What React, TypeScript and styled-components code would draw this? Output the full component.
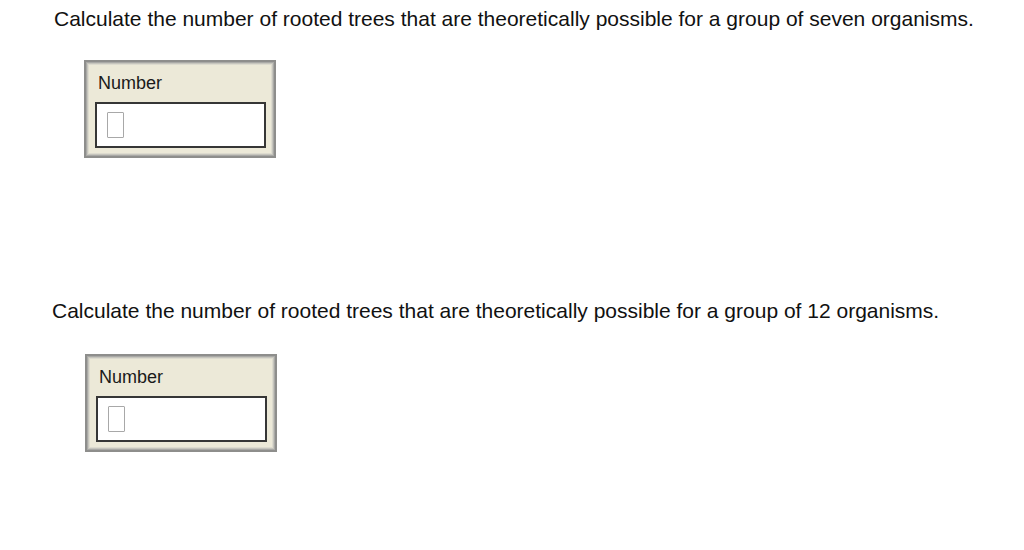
import styled, { createGlobalStyle } from "styled-components";

const GlobalStyle = createGlobalStyle`
    body {
        margin: 0;
        background: #ffffff;
        font-family: "Liberation Sans", Arial, sans-serif;
        color: #111111;
    }
`;

const Page = styled.div`
    width: 1024px;
    height: 550px;
    overflow: hidden;
`;

const Question = styled.div<{ $top: number; $left: number }>`
    margin-top: ${(p) => p.$top}px;
    padding-left: ${(p) => p.$left}px;
    font-size: 21px;
    line-height: 24px;
    white-space: nowrap;
`;

const Frame = styled.div<{ $top: number; $left: number }>`
    margin-top: ${(p) => p.$top}px;
    margin-left: ${(p) => p.$left}px;
    width: 192px;
    box-sizing: border-box;
    background: #ece9d8;
    border: 2px solid #8e8e8c;
    box-shadow: inset 0 0 0 1px #a9a9a6, inset 0 0 0 2px #c6c5bd,
        inset 0 0 0 3px #dddbcf;
    padding: 0 8px 8px 9px;
`;

const Label = styled.div`
    height: 40px;
    line-height: 40px;
    padding: 1px 0 0 3px;
    box-sizing: border-box;
    font-size: 18px;
    color: #1a1a1a;
`;

const Field = styled.div`
    height: 46px;
    box-sizing: border-box;
    background: #ffffff;
    border: 2px solid #363636;
    display: flex;
    align-items: center;
    padding-left: 10px;
`;

const Caret = styled.span`
    width: 17px;
    height: 26px;
    box-sizing: border-box;
    border: 1.5px solid #a8a8a8;
    border-radius: 1px;
`;

const AnswerBox = ({ top, left }: { top: number; left: number }) => (
    <Frame $top={top} $left={left}>
        <Label>Number</Label>
        <Field>
            <Caret />
        </Field>
    </Frame>
);

const App = () => {
    return (
        <Page>
            <GlobalStyle />
            <Question $top={7} $left={54}>
                Calculate the number of rooted trees that are theoretically
                possible for a group of seven organisms.
            </Question>
            <AnswerBox top={29} left={84} />
            <Question $top={141} $left={52}>
                Calculate the number of rooted trees that are theoretically
                possible for a group of 12 organisms.
            </Question>
            <AnswerBox top={31} left={85} />
        </Page>
    );
};

export default App;
